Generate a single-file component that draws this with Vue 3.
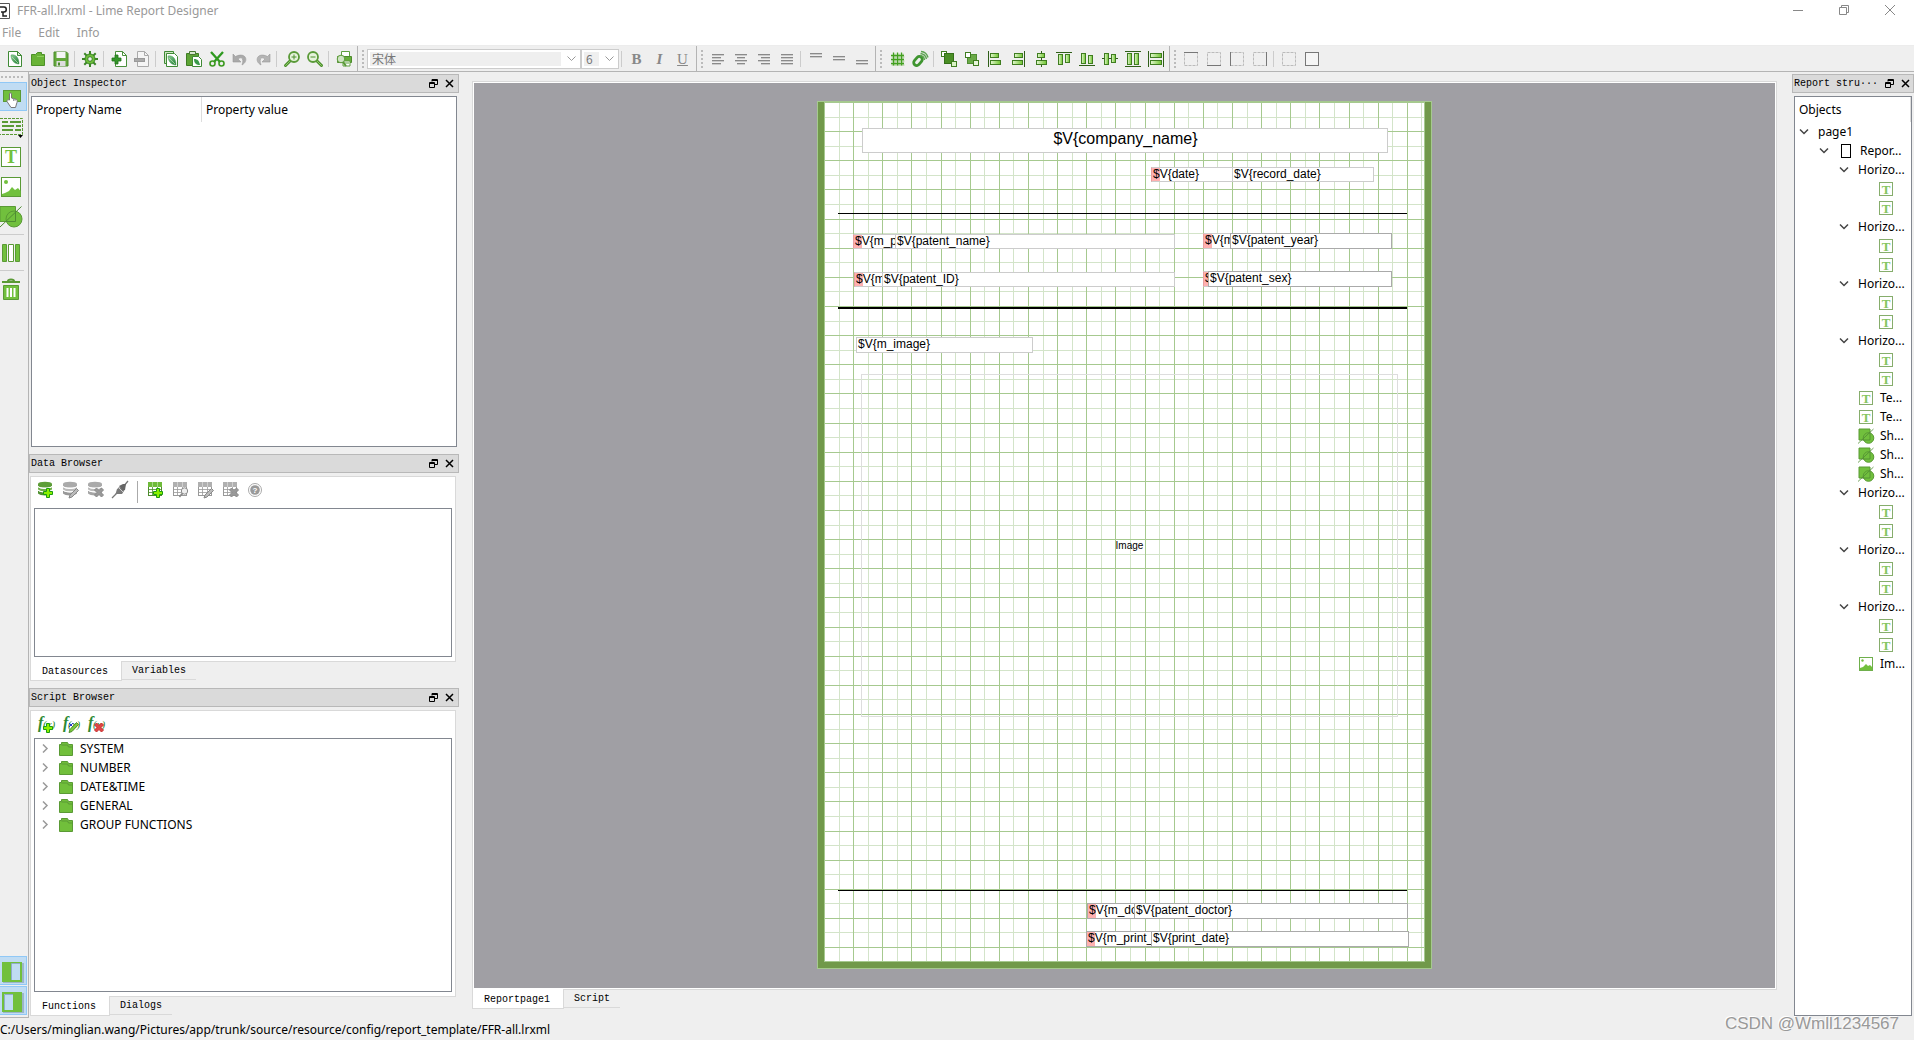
<script setup>
import { ref } from 'vue';

const font = ref('宋体');
const fontSize = ref('6');

const tIcon = (stroke, fill) =>
  `<rect x="1.5" y="1.5" width="13" height="13" fill="#fff" stroke="${stroke}"/><text x="8" y="12.5" text-anchor="middle" font-family="Liberation Serif, serif" font-size="13" font-weight="bold" fill="${fill}">T</text>`;
const dashed = '<rect x="1.5" y="1.5" width="13" height="13" fill="none" stroke="#bbb" stroke-dasharray="3 1"/>';
const plus = '<path d="M9.5 7.5h3v3h3v3h-3v3h-3v-3h-3v-3h3z" fill="#8cf000" stroke="#1a9c10"/>';
const pencil = '<path d="M14.500 7.500l2 2-6.500 6.500-3 1 1-3z" fill="#bbb" stroke="#888"/>';
const cross = '<path d="M7.500 9l2-2 2.500 2.500L14.500 7l2 2-2.500 2.500 2.500 2.500-2 2-2.500-2.500L9.500 16l-2-2 2.500-2.500z" fill="#999" stroke="#8a8a8a"/>';
const leaf = '<path d="M4 4c5-1 8 3 8 9-5 0-8-4-8-9z" fill="url(#leaf)" stroke="#4b9a55" stroke-width=".5"/><path d="M5 6l6 6" stroke="#bfe6b5" stroke-width=".7"/>';
const db = (top, rim, body) =>
  `<path d="M1 9.500v3c2 2.500 12 2.500 14 0v-3c-2 2.500-12 2.500-14 0z" fill="${body}"/><path d="M1 5.500v3c2 2.500 12 2.500 14 0v-3c-2 2.500-12 2.500-14 0z" fill="#f4f4f4"/><path d="M1 6v2.500c2 2.500 12 2.500 14 0V6c-2 2.500-12 2.500-14 0z" fill="${rim}"/><path d="M1 3v2c2 2 12 2 14 0V3z" fill="${top}"/><path d="M1 5.500c2 2.500 12 2.500 14 0M1 9c2 2.500 12 2.500 14 0" fill="none" stroke="#fff"/><ellipse cx="8" cy="3" rx="7" ry="2.300" fill="${top}"/>`;
const grid = (head, line) =>
  `<rect x="1.500" y="1.500" width="13" height="13" fill="#fff" stroke="${line}"/><rect x="1" y="1" width="14" height="5" fill="${head}"/><path d="M1 8.500h14M1 11.500h14M5.500 6v9M10.500 6v9" stroke="${line}" stroke-width=".8"/><path d="M5.500 1v5M10.500 1v5" stroke="#fff" stroke-opacity=".4"/>`;
const lines = (rows) =>
  rows.map(([x, y, w]) => `<rect x="${x}" y="${y}" width="${w}" height="1" fill="#8a8a8a"/><rect x="${x}" y="${y + 1}" width="${w}" height="1" fill="#ccc"/>`).join('');
const bars = (d, rects) =>
  `${rects.map(([x, y, w, h]) => `<rect x="${x}" y="${y}" width="${w}" height="${h}" fill="url(#bar)" stroke="#3f7d20"/>`).join('')}<path d="${d}" stroke="#2f5f18" fill="none"/>`;
const fx = '<text x="1" y="12" font-family="Liberation Serif, serif" font-size="16" font-style="italic" font-weight="bold" fill="#2c8a35">f</text><text x="6" y="12" font-family="Liberation Serif, serif" font-size="11" font-style="italic" fill="#2c8a35">(x)</text>';
const shapes = '<path d="M1 1h11v11H1z" fill="#71c03d" stroke="#5a9a35"/><circle cx="10.500" cy="10" r="5.300" fill="#71c03d" stroke="#5a9a35"/><path d="M12 5v7H5.500M0 15.500L15.500 1" fill="none" stroke="#4f8c33" stroke-width=".8"/>';
const zoomLens = '<path d="M7 9l-5.500 5.500" stroke="#4c8f2c" stroke-width="3" stroke-linecap="round"/><path d="M7 9l-5.500 5.500" stroke="#8fcb6a" stroke-linecap="round"/><circle cx="10" cy="6" r="5" fill="#e6f3dc" stroke="#5a9a38" stroke-width="1.800"/>';

const icons = {
  new: `<path d="M1.500.5h9l4 4v11h-13z" fill="#fff" stroke="#3f8a35"/><path d="M10.500.5v4h4z" fill="#dcebd5" stroke="#3f8a35"/>${leaf}`,
  open: '<path d="M1.500 14.500v-11h4l2-2h4v2h3v11z" fill="#69b336" stroke="#4d9128"/><path d="M7 5.500h7" stroke="#8ccf5c"/>',
  save: '<path d="M1 1h12.500L15 2.500V15H1z" fill="#63a83a" stroke="#4d8b2c"/><path d="M3.500 1h9v6h-9z" fill="#f5f5f5"/><path d="M3.500 10h9v5h-9z" fill="#ddd"/><path d="M5 11.500h2v3H5z" fill="#4d8b2c"/>',
  gear: '<path d="M8 0v16M0 8h16M2.300 2.300l11.400 11.400M13.700 2.300L2.300 13.700" stroke="#3b8526" stroke-width="2"/><circle cx="8" cy="8" r="5" fill="#6fbf3c" stroke="#3b8526"/><circle cx="8" cy="8" r="2.300" fill="#efefef" stroke="#3b8526"/>',
  add: '<path d="M4.500.5h7l4 4v11h-11z" fill="#fff" stroke="#4a8f3c"/><path d="M11.500.5v4h4" fill="none" stroke="#4a8f3c"/><path d="M4 4h3v3h3v3H7v3H4v-3H1V7h3z" fill="#35962a" stroke="#1f7518" stroke-width=".8"/>',
  remove: '<path d="M3.500.5h7l4 4v11h-11z" fill="#f5f5f5" stroke="#aaa"/><path d="M10.500.5v4h4" fill="none" stroke="#aaa"/><rect x=".5" y="7.500" width="10" height="3" fill="#aaa" stroke="#999"/>',
  copy: `<path d="M1.500.5h9v12h-9z" fill="#cfe6c4" stroke="#3f8a35"/><path d="M3.500 2.500h8l3 3v10h-11z" fill="#fff" stroke="#3f8a35"/><g transform="translate(1 1)">${leaf}</g>`,
  paste: `<path d="M.5 2.500h12v12H.5z" fill="#5ea535" stroke="#3f7d25"/><path d="M3.500.5h6v3h-6z" fill="#d9e8d0" stroke="#4a7a35"/><path d="M6.500 5.500h6l3 3v7h-9z" fill="#fff" stroke="#3f8a35"/><path d="M8 8c4 0 5 2 6 6-4 0-6-2-6-6z" fill="#3a9a4a"/>`,
  cut: '<path d="M2 1l9 10M14 1L5 11" stroke="#2f9a20" stroke-width="2.300"/><circle cx="3.500" cy="12.500" r="2.500" fill="none" stroke="#3c9a20" stroke-width="1.600"/><circle cx="12.500" cy="12.500" r="2.500" fill="none" stroke="#3c9a20" stroke-width="1.600"/>',
  undo: '<path d="M1 3v8h8L6 8c3-2.500 6.500-1 4 6C17.500 10 13.500.500 3.500 5.500z" fill="#aaa" stroke="#999" stroke-width=".6"/>',
  redo: '<path d="M15 3v8H7l3-3c-3-2.500-6.500-1-4 6C-1.500 10 2.500.500 12.500 5.500z" fill="#b4b4b4" stroke="#999" stroke-width=".6"/>',
  zoomIn: `${zoomLens}<path d="M10 3.500v5M7.500 6h5" stroke="#4c8f2c"/>`,
  zoomOut: '<g transform="translate(16 0) scale(-1 1)">' + zoomLens + '</g><path d="M3.500 6h5" stroke="#4c8f2c"/>',
  print: '<path d="M5.500.5h8v6h-8z" fill="#fff" stroke="#5f9f40"/><path d="M1.500 5.500h14v6h-14z" fill="#67ae3a" stroke="#4d8b2c"/><path d="M7 10h7v5H7z" fill="#fff" stroke="#5f9f40"/><path d="M8 12h5" stroke="#5f9f40"/><circle cx="5" cy="8" r="3.800" fill="#cfe5c3" stroke="#5a9a38"/><path d="M7 11l3 4" stroke="#5a9a38" stroke-width="2"/>',
  left: lines([[2, 3, 12], [2, 6, 9], [2, 9, 12], [2, 12, 9]]),
  center: lines([[2, 3, 12], [4, 6, 8], [2, 9, 12], [4, 12, 8]]),
  right: lines([[2, 3, 12], [5, 6, 9], [2, 9, 12], [5, 12, 9]]),
  justify: lines([[2, 3, 12], [2, 6, 12], [2, 9, 12], [2, 12, 12]]),
  top: lines([[2, 2, 12], [2, 5, 12]]),
  middle: lines([[2, 5, 12], [2, 8, 12]]),
  bottom: lines([[2, 9, 12], [2, 12, 12]]),
  grid: '<path d="M5.500 2v12M9.500 2v12M13.500 2v12M2 5.500h13M2 9.500h13M2 13.500h13" stroke="#a9cf95" transform="translate(.5 .5)"/><path d="M4.500 1.500v13M8.500 1.500v13M12.500 1.500v13M2 4.500h13M2 8.500h13M2 12.500h13" stroke="#43a020" stroke-width="1.300"/>',
  magnet: '<rect x="-3" y="-5" width="6" height="10" rx="3" transform="translate(6 10) rotate(40)" fill="none" stroke="#3f9530" stroke-width="2.800"/><path d="M8 4.500a5 5 0 0 1 4.500 4.500M8.500 2.500a7 7 0 0 1 6 5.500M9 .5a8 8 0 0 1 7 6" fill="none" stroke="#5ea352" stroke-width="1.400"/>',
  front: '<rect x=".5" y=".5" width="5" height="5" fill="#fff" stroke="#3f7d20"/><rect x="3.500" y="2.500" width="9" height="10" fill="#4b8f26" stroke="#35701a"/><rect x="10.500" y="10.500" width="5" height="5" fill="#d9f2c4" stroke="#3f7d20"/>',
  back: '<rect x="3.500" y="3.500" width="9" height="9" fill="#6aa948" stroke="#4f8c33"/><rect x="1.500" y="1.500" width="5" height="5" fill="#fff" stroke="#3f7d20"/><rect x="9.500" y="9.500" width="5" height="5" fill="#e8f5dc" stroke="#3f7d20"/>',
  alLeft: bars('M1.500 0v16', [[3.5, 2.5, 8, 4], [3.5, 9.5, 10, 4]]),
  alRight: bars('M14.500 0v16', [[4.5, 2.5, 8, 4], [2.5, 9.5, 10, 4]]),
  alCenter: bars('M8.500 0v2.500M8.500 7v2.500M8.500 14v2', [[4.5, 2.5, 7, 4], [3.5, 9.5, 10, 4]]),
  alTop: bars('M0 1.500h16', [[2.5, 3.5, 4, 10], [9.5, 3.5, 4, 8]]),
  alBottom: bars('M0 14.500h16', [[2.5, 2.5, 4, 10], [9.5, 4.5, 4, 8]]),
  alMiddle: bars('M0 7.500h2.500M7 7.500h2.500M14 7.500h2', [[2.5, 2.5, 4, 11], [9.5, 3.5, 4, 8]]),
  sameH: bars('M0 .5h16M0 15.500h16', [[2.5, 2.5, 4, 11], [9.5, 2.5, 4, 11]]),
  sameW: bars('M.5 0v16M15.500 0v16', [[2.5, 2.5, 11, 4], [2.5, 9.5, 11, 4]]),
  bTop: `${dashed}<path d="M1 1.500h14" stroke="#777"/>`,
  bBottom: `${dashed}<path d="M1 14.500h14" stroke="#777"/>`,
  bLeft: `${dashed}<path d="M1.500 1v14" stroke="#777"/>`,
  bRight: `${dashed}<path d="M14.500 1v14" stroke="#777"/>`,
  bNone: dashed,
  bAll: '<rect x="1.500" y="1.500" width="13" height="13" fill="#f5f5f5" stroke="#777"/>',
  dbAdd: db('#5d9d38', '#6fae4a', '#4f9130') + plus,
  dbEdit: db('#aaa', '#bbb', '#999') + pencil,
  dbDel: db('#aaa', '#bbb', '#a5a5a5') + cross,
  plug: '<path d="M0 17l5-5M11 6l5-6" stroke="#777" stroke-width="1.300"/><path d="M3.500 13L5 8l3-2 4 4-2 3z" fill="#7a7a7a"/><path d="M7 5l4-2 3 0-1 6-2 1z" fill="#666"/><path d="M6 6l5 5" stroke="#ccc"/>',
  tblAdd: grid('#6fbb3a', '#4d8b2c') + plus,
  tblView: grid('#b0b0b0', '#999') + '<circle cx="12.500" cy="10" r="3.200" fill="#eee" stroke="#888"/><path d="M10 12.500L7.500 16" stroke="#888" stroke-width="1.500"/>',
  tblEdit: grid('#b0b0b0', '#999') + pencil,
  tblDel: grid('#b0b0b0', '#999') + cross,
  help: '<circle cx="8" cy="9" r="6.500" fill="#fff" stroke="#aaa"/><circle cx="8" cy="9" r="4.800" fill="#999"/><text x="8" y="12" text-anchor="middle" font-family="Liberation Sans, sans-serif" font-size="8" font-weight="bold" fill="#fff">?</text>',
  fxAdd: fx + plus,
  fxEdit: fx + '<path d="M7 7l4 4M11 7l-4 4" stroke="#2436c8"/><path d="M14.500 6.500l2 2-6.500 7-3 1 1-3z" fill="#7cc93c" stroke="#4d8f2c"/>',
  fxDel: fx + cross.replace('#999', '#e04545').replace('#8a8a8a', '#c43030'),
  folder: '<path d="M1.500 14.500V3.500h2v-2h6l1 2h4v11z" fill="#71bf3b" stroke="#5a9a35"/><path d="M3.500 4h6l1 2h4" fill="none" stroke="#5a9a35"/>',
  text: tIcon('#86ad6c', '#85c561'),
  shapes,
  image: '<rect x="1.500" y="1.500" width="13" height="13" fill="#fff" stroke="#6faf4c"/><path d="M2 14v-2l3-1 3-3 2 2 2-1 2 2v3z" fill="#71c03d"/><circle cx="4.500" cy="4.500" r="1.200" fill="#71c03d"/>',
  page: '<rect x="3.500" y="1.500" width="9" height="13" fill="#fff" stroke="#000"/>',
};

const tools = {
  select: '<rect x="3.500" y="5.500" width="17" height="11" fill="#71c03d" stroke="#5a9a35"/><path d="M9.500 15V9c0-1.500 2-1.500 2 0v4l5 1.500c1 .5 1 2 0 4.500l-1 3.500H11l-4-6c-.5-1.500 1-2 2.500-1.500z" fill="#fff" stroke="#777"/><path d="M13.500 13.500v2.500M15 14v2" stroke="#999"/>',
  band: '<path d="M0 3.500h22.500v16H0" fill="none" stroke="#5a9a35" stroke-dasharray="3 1"/><path d="M2 7h6M10 7h11M2 11h12M16 11h5M2 15h11M15 15h6" stroke="#5a9a35" stroke-width="2"/><path d="M18 20h5l-2.500 3z"/>',
  text: '<rect x="1.500" y="2.500" width="19" height="19" fill="#fff" stroke="#5a9a35"/><text x="11" y="18" text-anchor="middle" font-family="Liberation Serif, serif" font-size="18" font-weight="bold" fill="#71c03d">T</text>',
  image: '<rect x="1.500" y="2.500" width="19" height="19" fill="#fff" stroke="#5a9a35"/><circle cx="6" cy="7" r="2" fill="#71c03d"/><path d="M2 21v-2l3-1 4-2 3-4 3 3 3-2 2.500 3v5z" fill="#71c03d"/>',
  shape: '<path d="M0 1.500h15.500v15H0z" fill="#71c03d" stroke="#5a9a35"/><circle cx="14" cy="14" r="8" fill="#71c03d" stroke="#5a9a35"/><path d="M15.500 6v10.500H6M0 22L21.500 1.500" fill="none" stroke="#4f8c33"/>',
  columns: '<g fill="#71c03d" stroke="#5a9a35"><path d="M2.500 3.500h4v17h-4zM15.500 3.500h4v17h-4z"/><path d="M8.500 3.500h5v17h-5z" fill="#fff"/></g>',
  trash: '<path d="M2 5h18M8 4c0-2 6-2 6 0" fill="none" stroke="#5a9a35" stroke-width="2"/><path d="M3.500 8.500h15v14h-15z" fill="#71c03d" stroke="#5a9a35"/><path d="M7.500 11v9M11 11v9M14.500 11v9" stroke="#fff" stroke-width="2"/>',
  panelLeft: '<path d="M3 4h21v20H3z" fill="#9cb5c9"/><path d="M2 3h20v20H2z" fill="#71c03d"/><path d="M12 5h8v16h-8z" fill="#c0dcf3"/><path d="M11.500 21V4.500H20" fill="none" stroke="#8faccb"/>',
  panelRight: '<path d="M3 4h21v20H3z" fill="#9cb5c9"/><path d="M2 3h20v20H2z" fill="#71c03d"/><path d="M4 5h9v16H4z" fill="#c0dcf3"/><path d="M4.500 21V5.500H13" fill="none" stroke="#8faccb"/>',
};

const mainTools = ['new', 'open', 'save', '|', 'gear', '|', 'add', 'remove', '|', 'copy', 'paste', 'cut', 'undo', 'redo', '|', 'zoomIn', 'zoomOut', '|', 'print'];
const toolGroups = [
  ['left', 'center', 'right', 'justify', '|', 'top', 'middle', 'bottom'],
  ['grid', 'magnet', '|', 'front', 'back', 'alLeft', 'alRight', 'alCenter', 'alTop', 'alBottom', 'alMiddle', 'sameH', 'sameW'],
  ['bTop', 'bBottom', 'bLeft', 'bRight', '|', 'bNone', 'bAll'],
];
const sideTools = ['select', 'band', 'text', 'image', 'shape', '|', 'columns', '|', 'trash'];
const dataTools = ['dbAdd', 'dbEdit', 'dbDel', 'plug', '|', 'tblAdd', 'tblView', 'tblEdit', 'tblDel', 'help'];
const scriptTools = ['fxAdd', 'fxEdit', 'fxDel'];
const functionGroups = ['SYSTEM', 'NUMBER', 'DATE&TIME', 'GENERAL', 'GROUP FUNCTIONS'];

const band = [
  { level: 3, open: true, label: 'Horizo...' },
  { level: 4, icon: 'text' },
  { level: 4, icon: 'text' },
];
const objects = [
  { level: 1, open: true, label: 'page1' },
  { level: 2, open: true, icon: 'page', label: 'Repor...' },
  ...band,
  ...band,
  ...band,
  ...band,
  { level: 3, icon: 'text', label: 'Te...' },
  { level: 3, icon: 'text', label: 'Te...' },
  { level: 3, icon: 'shapes', label: 'Sh...' },
  { level: 3, icon: 'shapes', label: 'Sh...' },
  { level: 3, icon: 'shapes', label: 'Sh...' },
  ...band,
  ...band,
  ...band,
  { level: 3, icon: 'image', label: 'Im...' },
];

// grid step of the page, every second line is a major one
const step = 14.57;
const vLines = Array.from({ length: 41 }, (_, i) => ({ pos: Math.round((i + 1) * step), major: i % 2 === 1 }));
const hLines = Array.from({ length: 58 }, (_, i) => ({ pos: Math.round((i + 1) * step), major: i % 2 === 1 }));

// positions are relative to the top left corner of the page
const items = [
  { x: 45, y: 27, w: 526, h: 25, text: '$V{company_name}', title: true },
  { x: 334, y: 66, w: 82, h: 15, text: '$V{date}', mark: true },
  { x: 415, y: 66, w: 142, h: 15, text: '$V{record_date}' },
  { x: 36, y: 133, w: 43, h: 15, text: '$V{m_p', mark: true },
  { x: 78, y: 133, w: 280, h: 15, text: '$V{patent_name}' },
  { x: 386, y: 132, w: 28, h: 16, text: '$V{m', mark: true },
  { x: 413, y: 132, w: 162, h: 16, text: '$V{patent_year}', dark: true },
  { x: 37, y: 171, w: 29, h: 15, text: '$V{m', mark: true },
  { x: 65, y: 171, w: 293, h: 15, text: '$V{patent_ID}' },
  { x: 386, y: 170, w: 6, h: 16, text: '$', mark: true },
  { x: 391, y: 170, w: 184, h: 16, text: '$V{patent_sex}', dark: true },
  { x: 39, y: 236, w: 177, h: 16, text: '$V{m_image}' },
  { x: 270, y: 802, w: 48, h: 16, text: '$V{m_do', mark: true, dark: true },
  { x: 317, y: 802, w: 274, h: 16, text: '$V{patent_doctor}', dark: true },
  { x: 269, y: 830, w: 66, h: 16, text: '$V{m_print_', mark: true, dark: true },
  { x: 334, y: 830, w: 258, h: 16, text: '$V{print_date}', dark: true },
];
const rules = [
  { y: 112, h: 1 },
  { y: 206, h: 2 },
  { y: 789, h: 1 },
];

const box = (o) => ({ left: `${o.x}px`, top: `${o.y}px`, width: `${o.w}px`, height: `${o.h}px` });
</script>

<template>
  <div class="window">
    <svg class="defs" width="0" height="0">
      <linearGradient id="bar"><stop offset="0" stop-color="#e4f7d2" /><stop offset="1" stop-color="#6fc52e" /></linearGradient>
      <linearGradient id="leaf" x2="1" y2="1"><stop offset="0" stop-color="#8fd09a" /><stop offset="1" stop-color="#1d7a30" /></linearGradient>
    </svg>

    <header class="titlebar">
      <svg width="10" height="18" viewBox="0 0 10 18">
        <path d="M0 1.500h9.500v15H0" fill="#fff" stroke="#555" />
        <path d="M0 5h4c3 0 3 5 0 5H1M3 10v4h4" fill="none" stroke="#222" stroke-width="1.500" />
      </svg>
      <h1>FFR-all.lrxml - Lime Report Designer</h1>
      <div class="window-buttons">
        <button aria-label="Minimize"><svg width="12" height="12"><path d="M1 6.500h10" stroke="#888" /></svg></button>
        <button aria-label="Restore"><svg width="12" height="12"><path d="M1.500 3.500h7v7h-7zM3.500 3V1.500h7v7H9" fill="none" stroke="#888" /></svg></button>
        <button aria-label="Close"><svg width="12" height="12"><path d="M1 1l10 10M11 1L1 11" stroke="#888" /></svg></button>
      </div>
    </header>

    <nav class="menu">
      <button>File</button>
      <button>Edit</button>
      <button>Info</button>
    </nav>

    <div class="toolbars">
      <div class="toolbar first">
        <template v-for="(name, i) in mainTools" :key="i">
          <span v-if="name === '|'" class="separator"></span>
          <button v-else :aria-label="name"><svg width="16" height="16" viewBox="0 0 16 16" v-html="icons[name]"></svg></button>
        </template>
      </div>
      <div class="toolbar">
        <span class="handle"></span>
        <div class="combo family">
          <select v-model="font" aria-label="Font"><option>宋体</option></select>
          <svg width="9" height="6"><path d="M.5.500l4 4 4-4" fill="none" stroke="#999" /></svg>
        </div>
        <div class="combo size">
          <select v-model="fontSize" aria-label="Font size"><option>6</option></select>
          <svg width="9" height="6"><path d="M.5.500l4 4 4-4" fill="none" stroke="#999" /></svg>
        </div>
        <span class="separator"></span>
        <button class="letter"><b>B</b></button>
        <button class="letter"><b><i>I</i></b></button>
        <button class="letter"><u>U</u></button>
      </div>
      <div v-for="(group, g) in toolGroups" :key="g" class="toolbar" :class="{ last: g === 2 }">
        <span class="handle"></span>
        <template v-for="(name, i) in group" :key="i">
          <span v-if="name === '|'" class="separator"></span>
          <button v-else :aria-label="name"><svg width="16" height="16" viewBox="0 0 16 16" v-html="icons[name]"></svg></button>
        </template>
      </div>
    </div>

    <main>
      <div class="side">
        <span class="side-handle"></span>
        <template v-for="(name, i) in sideTools" :key="i">
          <span v-if="name === '|'" class="side-separator"></span>
          <button v-else :class="{ active: name === 'select' }" :aria-label="name">
            <svg width="24" height="24" viewBox="0 0 24 24" v-html="tools[name]"></svg>
          </button>
        </template>
        <div class="side-bottom">
          <button class="active" aria-label="Left panel"><svg width="24" height="24" viewBox="0 0 24 24" v-html="tools.panelLeft"></svg></button>
          <button class="active" aria-label="Right panel"><svg width="24" height="24" viewBox="0 0 24 24" v-html="tools.panelRight"></svg></button>
        </div>
      </div>

      <div class="docks">
        <section class="dock inspector">
          <div class="dock-title">
            <h2>Object Inspector</h2>
            <button aria-label="Float"><svg width="9" height="9"><path d="M.500 3.500h5v5h-5zM.500 4.500h5M3 2.500v-2h5.500v5H6M3 1.500h5" fill="none" stroke="#000" /></svg></button>
            <button aria-label="Close"><svg width="9" height="9"><path d="M1 1l7 7M8 1L1 8" stroke="#000" stroke-width="1.500" /></svg></button>
          </div>
          <div class="frame">
            <table>
              <thead>
                <tr><th class="name">Property Name</th><th>Property value</th></tr>
              </thead>
            </table>
          </div>
        </section>

        <section class="dock data">
          <div class="dock-title">
            <h2>Data Browser</h2>
            <button aria-label="Float"><svg width="9" height="9"><path d="M.500 3.500h5v5h-5zM.500 4.500h5M3 2.500v-2h5.500v5H6M3 1.500h5" fill="none" stroke="#000" /></svg></button>
            <button aria-label="Close"><svg width="9" height="9"><path d="M1 1l7 7M8 1L1 8" stroke="#000" stroke-width="1.500" /></svg></button>
          </div>
          <div class="panel">
            <div class="panel-tools">
              <template v-for="(name, i) in dataTools" :key="i">
                <span v-if="name === '|'" class="panel-separator"></span>
                <button v-else :aria-label="name"><svg width="16" height="16" viewBox="0 0 16 16" v-html="icons[name]"></svg></button>
              </template>
            </div>
            <div class="list"></div>
          </div>
          <div class="tabs">
            <button class="current">Datasources</button>
            <button>Variables</button>
          </div>
        </section>

        <section class="dock script">
          <div class="dock-title">
            <h2>Script Browser</h2>
            <button aria-label="Float"><svg width="9" height="9"><path d="M.500 3.500h5v5h-5zM.500 4.500h5M3 2.500v-2h5.500v5H6M3 1.500h5" fill="none" stroke="#000" /></svg></button>
            <button aria-label="Close"><svg width="9" height="9"><path d="M1 1l7 7M8 1L1 8" stroke="#000" stroke-width="1.500" /></svg></button>
          </div>
          <div class="panel">
            <div class="panel-tools">
              <button v-for="name in scriptTools" :key="name" :aria-label="name"><svg width="16" height="16" viewBox="0 0 16 16" v-html="icons[name]"></svg></button>
            </div>
            <ul class="list functions">
              <li v-for="name in functionGroups" :key="name">
                <svg class="arrow" width="6" height="9"><path d="M1 .500l4 4-4 4" fill="none" stroke="#999" stroke-width="1.500" /></svg>
                <svg width="16" height="16" viewBox="0 0 16 16" v-html="icons.folder"></svg>
                {{ name }}
              </li>
            </ul>
          </div>
          <div class="tabs">
            <button class="current">Functions</button>
            <button>Dialogs</button>
          </div>
        </section>
      </div>

      <div class="editor">
        <div class="canvas">
          <div class="page">
            <svg class="grid" shape-rendering="crispEdges">
              <line v-for="l in vLines.filter((l) => !l.major)" :key="'v' + l.pos" :x1="l.pos" :x2="l.pos" y1="0" y2="100%" class="minor" />
              <line v-for="l in hLines.filter((l) => !l.major)" :key="'h' + l.pos" :y1="l.pos" :y2="l.pos" x1="0" x2="100%" class="minor" />
              <line v-for="l in vLines.filter((l) => l.major)" :key="'v' + l.pos" :x1="l.pos" :x2="l.pos" y1="0" y2="100%" />
              <line v-for="l in hLines.filter((l) => l.major)" :key="'h' + l.pos" :y1="l.pos" :y2="l.pos" x1="0" x2="100%" />
            </svg>
            <div class="image-item">Image</div>
            <div v-for="rule in rules" :key="rule.y" class="rule" :style="{ top: `${rule.y}px`, height: `${rule.h}px` }"></div>
            <div
              v-for="(item, i) in items"
              :key="i"
              class="item"
              :class="{ title: item.title, mark: item.mark, dark: item.dark }"
              :style="box(item)"
            >
              {{ item.text }}
            </div>
          </div>
        </div>
        <div class="tabs">
          <button class="current">Reportpage1</button>
          <button>Script</button>
        </div>
      </div>

      <section class="dock structure">
        <div class="dock-title">
          <h2>Report stru···</h2>
          <button aria-label="Float"><svg width="9" height="9"><path d="M.500 3.500h5v5h-5zM.500 4.500h5M3 2.500v-2h5.500v5H6M3 1.500h5" fill="none" stroke="#000" /></svg></button>
          <button aria-label="Close"><svg width="9" height="9"><path d="M1 1l7 7M8 1L1 8" stroke="#000" stroke-width="1.500" /></svg></button>
        </div>
        <div class="frame">
          <div class="objects-header">Objects</div>
          <ul class="objects">
            <li v-for="(o, i) in objects" :key="i" :class="'level-' + o.level">
              <svg class="arrow" width="10" height="6"><path v-if="o.open" d="M1 .500l4 4 4-4" fill="none" stroke="#444" stroke-width="1.500" /></svg>
              <svg v-if="o.icon" class="icon" width="16" height="16" viewBox="0 0 16 16" v-html="icons[o.icon]"></svg>
              {{ o.label }}
            </li>
          </ul>
        </div>
      </section>
    </main>

    <footer>C:/Users/minglian.wang/Pictures/app/trunk/source/resource/config/report_template/FFR-all.lrxml</footer>
    <div class="watermark">CSDN @Wmll1234567</div>
  </div>
</template>

<style>
body {
  margin: 0;
}
</style>

<style scoped>
.window {
  display: flex;
  flex-direction: column;
  height: 100vh;
  background: #efefef;
  font: 12px/18px 'Noto Sans', 'Noto Sans CJK SC', sans-serif;
  color: #000;
  overflow: hidden;
  position: relative;
}

.defs {
  position: absolute;
}

svg {
  display: block;
  flex: none;
  overflow: visible;
}

button {
  border: 0;
  padding: 0;
  background: none;
  font: inherit;
  color: inherit;
}

h1,
h2,
ul {
  margin: 0;
  padding: 0;
  font: inherit;
  list-style: none;
}

.titlebar {
  display: flex;
  align-items: center;
  gap: 7px;
  box-sizing: border-box;
  height: 24px;
  padding-bottom: 2px;
  background: #fff;
  color: #999;
}

.window-buttons {
  display: flex;
  gap: 34px;
  margin-left: auto;
  padding: 0 18px 2px 0;
}

.menu {
  display: flex;
  align-items: flex-start;
  gap: 17px;
  height: 21px;
  padding-left: 2px;
  background: #fff;
  border-bottom: 1px solid #ececec;
  color: #999;
}

.toolbars {
  display: flex;
  height: 25px;
  border-bottom: 1px solid #b4b4b4;
}

.toolbar {
  display: flex;
  align-items: center;
  padding-right: 2px;
  border-right: 1px solid #b4b4b4;
}

.toolbar.first {
  padding-left: 3px;
}

.toolbar.last {
  border-right: 0;
}

.toolbar button {
  width: 23px;
  height: 16px;
  padding-left: 4px;
}

.toolbar .letter {
  padding: 0;
  font: 15px/16px 'Liberation Serif', serif;
  color: #888;
}

.separator {
  width: 1px;
  height: 16px;
  margin: 0 3px 0 2px;
  background: #ccc;
}

.handle {
  width: 2px;
  height: 18px;
  margin: 0 3px 0 4px;
  background: repeating-linear-gradient(#bbb 0 2px, transparent 2px 4px);
}

.combo {
  display: flex;
  align-items: center;
  box-sizing: border-box;
  height: 20px;
  border: 1px solid #ccc;
  background: #fff;
  padding: 2px 4px 2px 2px;
  gap: 6px;
}

.combo.family {
  width: 214px;
}

.combo.size {
  width: 38px;
}

.combo select {
  flex: 1;
  min-width: 0;
  height: 14px;
  padding: 0 0 0 2px;
  border: 0;
  appearance: none;
  background: #efefef;
  color: #777;
  font: 12px/14px 'Noto Sans CJK SC', sans-serif;
}

main {
  display: flex;
  flex: 1;
  min-height: 0;
}

.side {
  display: flex;
  flex-direction: column;
  gap: 1px;
  width: 28px;
  border-right: 1px solid #b4b4b4;
  border-bottom: 1px solid #b4b4b4;
}

.side-handle {
  height: 2px;
  width: 24px;
  margin: 4px 0 3px 1px;
  background: repeating-linear-gradient(90deg, #bbb 0 2px, transparent 2px 4px);
}

.side button {
  box-sizing: border-box;
  width: 27px;
  height: 29px;
  border: 1px solid transparent;
  border-left: 0;
}

.side button.active {
  background: #c0dcf3;
  border-color: #90c8f6;
}

.side-separator {
  width: 24px;
  height: 1px;
  margin: 2px 0;
  background: #ccc;
}

.side-bottom {
  display: flex;
  flex-direction: column;
  gap: 1px;
  margin: auto 0 2px;
}

.docks {
  display: flex;
  flex-direction: column;
  gap: 7px;
  width: 430px;
  padding: 2px 0;
}

.dock {
  display: flex;
  flex-direction: column;
  min-height: 0;
}

.inspector {
  flex: 373 1 0;
}

.data {
  flex: 228 1 0;
}

.script {
  flex: 328 1 0;
}

.dock-title {
  display: flex;
  align-items: center;
  gap: 7px;
  box-sizing: border-box;
  height: 19px;
  padding: 0 4px 0 1px;
  border: 1px solid #b8b8b8;
  background: #dadada;
}

.dock-title h2 {
  flex: 1;
  font: 10px/17px 'Liberation Mono', monospace;
  white-space: nowrap;
}

.frame {
  flex: 1;
  min-height: 0;
  margin: 3px 2px 0;
  border: 1px solid #828790;
  background: #fff;
}

table {
  width: 100%;
  border-collapse: collapse;
}

th {
  height: 25px;
  padding: 0 0 0 4px;
  font-weight: normal;
  text-align: left;
}

th.name {
  width: 165px;
  border-right: 1px solid #ddd;
}

.panel {
  display: flex;
  flex-direction: column;
  flex: 1;
  min-height: 0;
  margin: 3px 3px 0 1px;
  border: 1px solid #d9d9d9;
  background: #fff;
}

.panel-tools {
  display: flex;
  align-items: flex-start;
  gap: 9px;
  box-sizing: border-box;
  height: 27px;
  padding: 5px 6px 0;
}

.data .panel-tools {
  height: 31px;
  padding-top: 4px;
}

.panel-separator {
  width: 1px;
  height: 22px;
  background: #aaa;
}

.list {
  flex: 1;
  margin: 0 3px 4px;
  border: 1px solid #828790;
}

.functions li {
  display: flex;
  align-items: center;
  height: 19px;
  padding-left: 7px;
}

.functions .arrow {
  margin-right: 10px;
}

.functions li svg:last-of-type {
  margin-right: 6px;
}

.tabs {
  display: flex;
  align-items: flex-start;
  height: 19px;
  padding-left: 1px;
  font: 10px/17px 'Liberation Mono', monospace;
}

.tabs button {
  padding: 0 10px;
  border-bottom: 1px solid #d9d9d9;
}

.tabs .current {
  height: 20px;
  margin-top: -1px;
  padding: 2px 13px 0 11px;
  border: 1px solid #d9d9d9;
  border-top: 0;
  background: #fff;
}

.editor {
  display: flex;
  flex-direction: column;
  flex: 1;
  min-width: 0;
  padding: 9px 15px 9px 13px;
}

.editor .tabs {
  padding-left: 0;
}

.canvas {
  display: flex;
  justify-content: center;
  flex: 1;
  min-height: 0;
  border: 1px solid #d9d9d9;
  outline: 1px solid #fff;
  outline-offset: -2px;
  background: #a09fa4;
}

.page {
  position: relative;
  width: 615px;
  margin: 19px 0 20px;
  box-shadow: inset 0 0 0 1px #a6c98f, inset 7px 0 #71994a, inset -7px -7px #71994a;
  background: #fff;
}

.grid {
  position: absolute;
  left: 7px;
  top: 1px;
  width: calc(100% - 14px);
  height: calc(100% - 8px);
  overflow: hidden;
  outline: 1px solid #a6c98f;
  outline-offset: -1px;
}

.grid line {
  stroke: #a6c98f;
}

.grid .minor {
  stroke: #d3e4c9;
}

.item {
  position: absolute;
  box-sizing: border-box;
  padding-left: 1px;
  border: 1px solid #ccc;
  background: #fff;
  font: 12px/13px 'Liberation Sans', sans-serif;
  white-space: nowrap;
  overflow: hidden;
}

.item.title {
  font-size: 16px;
  line-height: 20px;
  text-align: center;
}

.item.mark {
  background: linear-gradient(90deg, #ffb0b0 8px, #fff 8px);
  border-left-color: #e8a0a0;
}

.item.dark {
  border-color: #aaa;
}

.rule {
  position: absolute;
  left: 21px;
  right: 25px;
  background: #000;
}

.image-item {
  position: absolute;
  left: 44px;
  top: 273px;
  box-sizing: border-box;
  width: 537px;
  height: 343px;
  border: 1px solid #ddd;
  font: 10px/341px 'Liberation Sans', sans-serif;
  text-align: center;
}

.structure {
  width: 122px;
  padding: 2px 0;
}

.objects-header {
  height: 25px;
  padding-left: 4px;
  line-height: 25px;
  border-right: 1px solid #ddd;
}

.objects li {
  display: flex;
  align-items: center;
  height: 19px;
  white-space: nowrap;
}

.objects .arrow {
  margin: 0 9px 0 4px;
}

.objects .icon {
  margin-right: 6px;
}

.level-2 {
  padding-left: 20px;
}

.level-3 {
  padding-left: 40px;
}

.level-4 {
  padding-left: 60px;
}

footer {
  height: 22px;
  line-height: 24px;
}

.watermark {
  position: absolute;
  right: 15px;
  bottom: 5px;
  font: 17px/22px 'Liberation Sans', sans-serif;
  color: #999;
  text-shadow: -1px -1px #fff;
}
</style>
